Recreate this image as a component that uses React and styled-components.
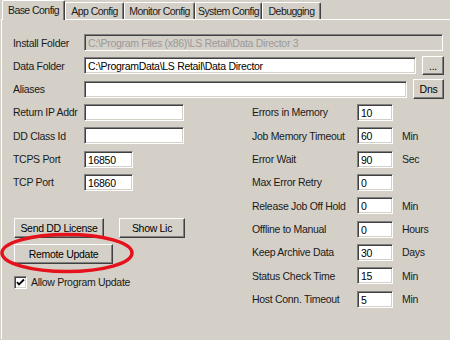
import styled, { createGlobalStyle } from "styled-components";

const Global = createGlobalStyle`
  html, body {
    margin: 0;
    background: #d4d0c8;
    font-family: "Liberation Sans", Arial, sans-serif;
    font-size: 10.5px;
    letter-spacing: -0.3px;
    color: #1a1a1a;
  }
`;

const Window = styled.div`
  position: relative;
  width: 450px;
  height: 340px;
  overflow: hidden;
  background: #d4d0c8;
`;

const TabStrip = styled.div`
  display: flex;
  align-items: flex-end;
  height: 19px;
  padding-left: 2px;
`;

const Tab = styled.div`
  box-sizing: border-box;
  width: ${(p) => p.$w}px;
  height: ${(p) => (p.$active ? "20px" : "17px")};
  padding-top: ${(p) => (p.$active ? "3px" : "2px")};
  text-align: center;
  letter-spacing: -0.55px;
  border-top: 1px solid #fff;
  border-left: 1px solid #fff;
  border-right: 1px solid #404040;
  box-shadow: inset -1px 0 #808080;
  border-radius: 2px 2px 0 0;
  white-space: nowrap;
  overflow: hidden;
  position: relative;
  z-index: ${(p) => (p.$active ? 2 : 1)};
  margin-bottom: ${(p) => (p.$active ? "-1px" : "0")};
  background: #d4d0c8;
`;

const Panel = styled.div`
  margin-left: 1px;
  border-top: 1px solid #fff;
  border-left: 1px solid #fff;
  padding: 14px 0 0 11px;
  height: 320px;
  box-sizing: border-box;
`;

const Field = styled.div`
  display: flex;
  align-items: center;
  height: 17px;
`;

const FullRows = styled.div`
  display: flex;
  flex-direction: column;
  gap: 6.33px;
  margin-bottom: 6.33px;
`;

const Label = styled.span`
  width: ${(p) => p.$w || 71}px;
  flex: none;
  white-space: nowrap;
`;

const Input = styled.div`
  box-sizing: border-box;
  width: ${(p) => p.$w}px;
  height: 17px;
  flex: none;
  background: ${(p) => (p.$disabled ? "#d4d0c8" : "#fff")};
  color: ${(p) => (p.$disabled ? "#9a9a9a" : "#000")};
  border-top: 1px solid #808080;
  border-left: 1px solid #808080;
  border-bottom: 1px solid #fff;
  border-right: 1px solid #fff;
  box-shadow: inset 1px 1px #404040, inset -1px -1px #d4d0c8;
  padding: 1px 0 0 3px;
  line-height: 14px;
  white-space: nowrap;
  overflow: hidden;
`;

const Button = styled.button`
  box-sizing: border-box;
  width: ${(p) => p.$w}px;
  height: ${(p) => p.$h || 20}px;
  margin-left: ${(p) => p.$ml || 0}px;
  flex: none;
  background: #d4d0c8;
  font: inherit;
  letter-spacing: inherit;
  color: #000;
  padding: 0;
  border-top: 1px solid #fff;
  border-left: 1px solid #fff;
  border-right: 1px solid #404040;
  border-bottom: 1px solid #404040;
  box-shadow: inset -1px -1px #808080;
  border-radius: 0;
`;

const Columns = styled.div`
  display: flex;
`;

const LeftCol = styled.div`
  width: 239px;
  display: flex;
  flex-direction: column;
`;

const RightCol = styled.div`
  display: flex;
  flex-direction: column;
  gap: 6.33px;
`;

const FieldStack = styled.div`
  display: flex;
  flex-direction: column;
  gap: 6.33px;
`;

const ButtonRow = styled.div`
  display: flex;
  margin-top: ${(p) => p.$mt}px;
  padding-left: 1px;
`;

const Unit = styled.span`
  margin-left: 9px;
`;

const CheckRow = styled.label`
  display: flex;
  align-items: center;
  gap: 4px;
  margin-top: 12px;
  padding-left: 1px;
`;

const CheckBox = styled.span`
  box-sizing: border-box;
  width: 13px;
  height: 13px;
  background: #fff;
  border-top: 1px solid #808080;
  border-left: 1px solid #808080;
  border-bottom: 1px solid #fff;
  border-right: 1px solid #fff;
  box-shadow: inset 1px 1px #404040, inset -1px -1px #d4d0c8;
  display: flex;
  align-items: center;
  justify-content: center;
`;

const Ellipse = styled.svg`
  position: absolute;
  left: 0;
  top: 231px;
  pointer-events: none;
`;

const tabs = [
  ["Base Config", 63],
  ["App Config", 59],
  ["Monitor Config", 71],
  ["System Config", 67],
  ["Debugging", 59],
];

const rightFields = [
  ["Errors in Memory", "10", ""],
  ["Job Memory Timeout", "60", "Min"],
  ["Error Wait", "90", "Sec"],
  ["Max Error Retry", "0", ""],
  ["Release Job Off Hold", "0", "Min"],
  ["Offline to Manual", "0", "Hours"],
  ["Keep Archive Data", "30", "Days"],
  ["Status Check Time", "15", "Min"],
  ["Host Conn. Timeout", "5", "Min"],
];

export default function App() {
  return (
    <Window>
      <Global />
      <TabStrip>
        {tabs.map(([t, w], i) => (
          <Tab key={t} $w={w} $active={i === 0}>
            {t}
          </Tab>
        ))}
      </TabStrip>
      <Panel>
        <FullRows>
          <Field>
            <Label>Install Folder</Label>
            <Input $w={359} $disabled>
              C:\Program Files (x86)\LS Retail\Data Director 3
            </Input>
          </Field>
          <Field>
            <Label>Data Folder</Label>
            <Input $w={332}>C:\ProgramData\LS Retail\Data Director</Input>
            <Button $w={22} $h={19} $ml={6}>
              ...
            </Button>
          </Field>
          <Field>
            <Label>Aliases</Label>
            <Input $w={323} />
            <Button $w={31} $ml={6}>
              Dns
            </Button>
          </Field>
        </FullRows>
        <Columns>
          <LeftCol>
            <FieldStack>
              <Field>
                <Label>Return IP Addr</Label>
                <Input $w={100} />
              </Field>
              <Field>
                <Label>DD Class Id</Label>
                <Input $w={100} />
              </Field>
              <Field>
                <Label>TCPS Port</Label>
                <Input $w={49}>16850</Input>
              </Field>
              <Field>
                <Label>TCP Port</Label>
                <Input $w={49}>16860</Input>
              </Field>
            </FieldStack>
            <ButtonRow $mt={27}>
              <Button $w={90}>Send DD License</Button>
              <Button $w={66} $ml={15}>
                Show Lic
              </Button>
            </ButtonRow>
            <ButtonRow $mt={6}>
              <Button $w={99}>Remote Update</Button>
            </ButtonRow>
            <CheckRow>
              <CheckBox>
                <svg width="9" height="9" viewBox="0 0 9 9">
                  <path d="M1 4 L3 6.5 L8 1.5" stroke="#000" strokeWidth="1.8" fill="none" />
                </svg>
              </CheckBox>
              Allow Program Update
            </CheckRow>
          </LeftCol>
          <RightCol>
            {rightFields.map(([l, v, u]) => (
              <Field key={l}>
                <Label $w={105}>{l}</Label>
                <Input $w={36}>{v}</Input>
                {u && <Unit>{u}</Unit>}
              </Field>
            ))}
          </RightCol>
        </Columns>
      </Panel>
      <Ellipse width="140" height="46" viewBox="0 0 140 46">
        <ellipse cx="67" cy="22" rx="65" ry="18.5" fill="none" stroke="#e5121c" strokeWidth="3.5" />
      </Ellipse>
    </Window>
  );
}
